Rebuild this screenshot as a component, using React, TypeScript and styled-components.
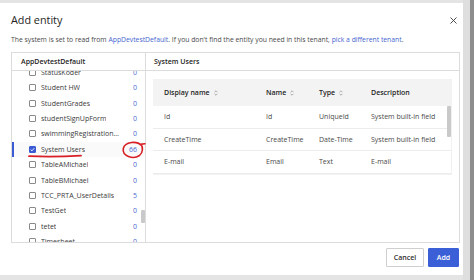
import React from "react";
import styled, { createGlobalStyle } from "styled-components";

const GlobalStyle = createGlobalStyle`
  html, body { margin: 0; padding: 0; }
  body {
    background: #e4e4e4;
    font-family: "Open Sans", "Noto Sans", Arial, sans-serif;
    color: #323130;
    overflow: hidden;
  }
  * { box-sizing: border-box; }
`;

const Page = styled.div`
  position: relative;
  width: 474px;
  height: 280px;
  display: flex;
  align-items: flex-start;
  padding-top: 3px;
`;

const Dialog = styled.div`
  width: 463px;
  height: 272px;
  background: #fff;
  display: flex;
  flex-direction: column;
  padding: 8px 3px 0 11px;
`;

const Gutter = styled.div`
  flex: 1;
  align-self: stretch;
  margin-top: -3px;
  height: 280px;
  display: flex;
  justify-content: flex-end;
  background: #dedede;
`;

const DarkStrip = styled.div`
  width: 4px;
  height: 100%;
  background: #8d8d8d;
`;

const TitleRow = styled.div`
  height: 18px;
  display: flex;
  align-items: center;
  justify-content: space-between;
  padding-right: 2px;
`;

const Title = styled.h1`
  margin: 0;
  font-size: 10.8px;
  font-weight: 400;
  color: #252423;
  line-height: 18px;
`;

const CloseButton = styled.button`
  border: 0;
  background: none;
  padding: 0;
  width: 10px;
  height: 10px;
  display: flex;
  align-items: center;
  justify-content: center;
  color: #444;
`;

const Description = styled.p`
  margin: 6px 0 0;
  font-size: 6.8px;
  line-height: 10px;
  color: #4a4a4a;
  white-space: nowrap;
`;

const Link = styled.a`
  color: #4566d1;
  text-decoration: none;
`;

const Box = styled.div`
  margin-top: 7px;
  height: 191px;
  border: 1px solid #dcdcdc;
  display: flex;
`;

const LeftCol = styled.div`
  width: 134px;
  border-right: 1px solid #dcdcdc;
  display: flex;
  flex-direction: column;
  position: relative;
`;

const ColHeader = styled.div<{ $bold?: boolean }>`
  height: 18px;
  flex: none;
  border-bottom: 1px solid #dcdcdc;
  display: flex;
  align-items: center;
  padding-left: ${(p) => (p.$bold ? "9px" : "8px")};
  font-size: 7px;
  font-weight: 600;
  color: #252423;
`;

const ListViewport = styled.div`
  flex: 1;
  overflow: hidden;
  position: relative;
`;

const List = styled.ul`
  list-style: none;
  margin: -6.4px 0 0;
  padding: 0;
`;

const Row = styled.li<{ $selected?: boolean }>`
  height: 15.4px;
  display: flex;
  align-items: center;
  padding: 0 8px 0 17px;
  font-size: 7px;
  color: #3a3a3a;
  box-shadow: ${(p) => (p.$selected ? "inset 2px 0 0 #3a5bd4" : "none")};
  background: ${(p) => (p.$selected ? "#fafafa" : "transparent")};
`;

const Check = styled.span<{ $checked?: boolean }>`
  width: 7px;
  height: 7px;
  flex: none;
  border: 1px solid ${(p) => (p.$checked ? "#3a5bd4" : "#8a8a8a")};
  background: ${(p) => (p.$checked ? "#3a5bd4" : "#fff")};
  border-radius: 1px;
  display: flex;
  align-items: center;
  justify-content: center;
  margin-right: 5px;
`;

const Label = styled.span`
  min-width: 0;
  white-space: nowrap;
  overflow: hidden;
  text-overflow: ellipsis;
  max-width: 80px;
`;

const Count = styled.span`
  margin-left: auto;
  padding-left: 4px;
  color: #4a6ad0;
  font-size: 7px;
`;

const ScrollThumb = styled.div<{ $top: number; $height: number; $right: number }>`
  position: absolute;
  right: ${(p) => p.$right}px;
  top: ${(p) => p.$top}px;
  width: 4px;
  height: ${(p) => p.$height}px;
  background: #c9c9c9;
  border-radius: 1px;
`;

const RightCol = styled.div`
  flex: 1;
  display: flex;
  flex-direction: column;
`;

const TableWrap = styled.div`
  position: relative;
  margin: 8px 7px 0 7px;
  border: 1px solid #f1f1f1;
  border-top: 0;
  border-left: 0;
`;

const GridRow = styled.div<{ $head?: boolean }>`
  display: grid;
  grid-template-columns: 102px 53px 52px 1fr;
  height: ${(p) => (p.$head ? "27px" : "22.6px")};
  align-items: center;
  background: ${(p) => (p.$head ? "#f3f3f4" : "#fff")};
  border-bottom: ${(p) => (p.$head ? "0" : "1px solid #ececec")};
  &:last-child { border-bottom: 0; }
`;

const Cell = styled.div<{ $head?: boolean }>`
  padding-left: 11px;
  font-size: 7px;
  font-weight: ${(p) => (p.$head ? 600 : 400)};
  color: ${(p) => (p.$head ? "#252423" : "#4a4a4a")};
  white-space: nowrap;
  display: flex;
  align-items: center;
  gap: 4px;
`;

const Footer = styled.div`
  margin-top: 5px;
  display: flex;
  justify-content: flex-end;
  gap: 4px;
  padding-right: 1px;
`;

const Button = styled.button<{ $primary?: boolean }>`
  height: 19px;
  padding: 0;
  width: ${(p) => (p.$primary ? "31px" : "38px")};
  border: 1px solid ${(p) => (p.$primary ? "#3b5fd6" : "#cfcfcf")};
  background: ${(p) => (p.$primary ? "#3b5fd6" : "#fff")};
  color: ${(p) => (p.$primary ? "#fff" : "#323130")};
  font-family: inherit;
  font-size: 7px;
  font-weight: 600;
  border-radius: 1px;
`;

const Annotation = styled.svg`
  position: absolute;
  left: 0;
  top: 0;
  pointer-events: none;
`;

const SortIcon = () => (
  <svg width="4" height="6" viewBox="0 0 4 6" fill="none" stroke="#8a8a8a" strokeWidth="0.7">
    <path d="M0.6 2.2 L2 0.8 L3.4 2.2" />
    <path d="M0.6 3.8 L2 5.2 L3.4 3.8" />
  </svg>
);

const items: { name: string; count: number; checked?: boolean }[] = [
  { name: "StatusKoder", count: 0 },
  { name: "Student HW", count: 0 },
  { name: "StudentGrades", count: 0 },
  { name: "studentSignUpForm", count: 0 },
  { name: "swimmingRegistrationForm", count: 0 },
  { name: "System Users", count: 66, checked: true },
  { name: "TableAMichael", count: 0 },
  { name: "TableBMichael", count: 0 },
  { name: "TCC_PRTA_UserDetails", count: 5 },
  { name: "TestGet", count: 0 },
  { name: "tetet", count: 0 },
  { name: "Timesheet", count: 0 },
];

const rows = [
  ["Id", "Id", "UniqueId", "System built-in field"],
  ["CreateTime", "CreateTime", "Date-Time", "System built-in field"],
  ["E-mail", "Email", "Text", "E-mail"],
];

export default function App() {
  return (
    <>
      <GlobalStyle />
      <Page>
        <Dialog>
          <TitleRow>
            <Title>Add entity</Title>
            <CloseButton aria-label="Close">
              <svg width="7" height="7" viewBox="0 0 7 7" stroke="#3a3a3a" strokeWidth="0.9">
                <path d="M0.5 0.5 L6.5 6.5 M6.5 0.5 L0.5 6.5" />
              </svg>
            </CloseButton>
          </TitleRow>
          <Description>
            The system is set to read from <Link>AppDevtestDefault</Link>. If you don't find the entity you need in this
            tenant, <Link>pick a different tenant</Link>.
          </Description>
          <Box>
            <LeftCol>
              <ColHeader $bold>AppDevtestDefault</ColHeader>
              <ListViewport>
                <List>
                  {items.map((it) => (
                    <Row key={it.name} $selected={it.checked}>
                      <Check $checked={it.checked}>
                        {it.checked && (
                          <svg width="5" height="5" viewBox="0 0 5 5" fill="none" stroke="#fff" strokeWidth="0.9">
                            <path d="M0.7 2.6 L2 3.8 L4.3 1.2" />
                          </svg>
                        )}
                      </Check>
                      <Label>{it.name}</Label>
                      <Count>{it.count}</Count>
                    </Row>
                  ))}
                </List>
                <ScrollThumb $top={139} $height={13} $right={0} />
              </ListViewport>
            </LeftCol>
            <RightCol>
              <ColHeader>System Users</ColHeader>
              <TableWrap>
                <GridRow $head>
                  <Cell $head>
                    Display name <SortIcon />
                  </Cell>
                  <Cell $head>
                    Name <SortIcon />
                  </Cell>
                  <Cell $head>
                    Type <SortIcon />
                  </Cell>
                  <Cell $head>Description</Cell>
                </GridRow>
                {rows.map((r) => (
                  <GridRow key={r[0]}>
                    {r.map((c, i) => (
                      <Cell key={i}>{c}</Cell>
                    ))}
                  </GridRow>
                ))}
                <ScrollThumb $top={27} $height={31} $right={0} />
              </TableWrap>
            </RightCol>
          </Box>
          <Footer>
            <Button>Cancel</Button>
            <Button $primary>Add</Button>
          </Footer>
        </Dialog>
        <Gutter>
          <DarkStrip />
        </Gutter>
        <Annotation width="474" height="280" viewBox="0 0 474 280" fill="none" stroke="#d81f26" strokeLinecap="round">
          <path d="M29 156.2 Q55 157.2 81 155.6" strokeWidth="1.8" />
          <path
            d="M141.5 145.5 C137 140.5 125 141.5 123.3 148.5 C122 156 133 160 139.5 155.5 C143 152.5 143.2 147.5 141 144.2 L145 143.8"
            strokeWidth="1.6"
          />
        </Annotation>
      </Page>
    </>
  );
}
